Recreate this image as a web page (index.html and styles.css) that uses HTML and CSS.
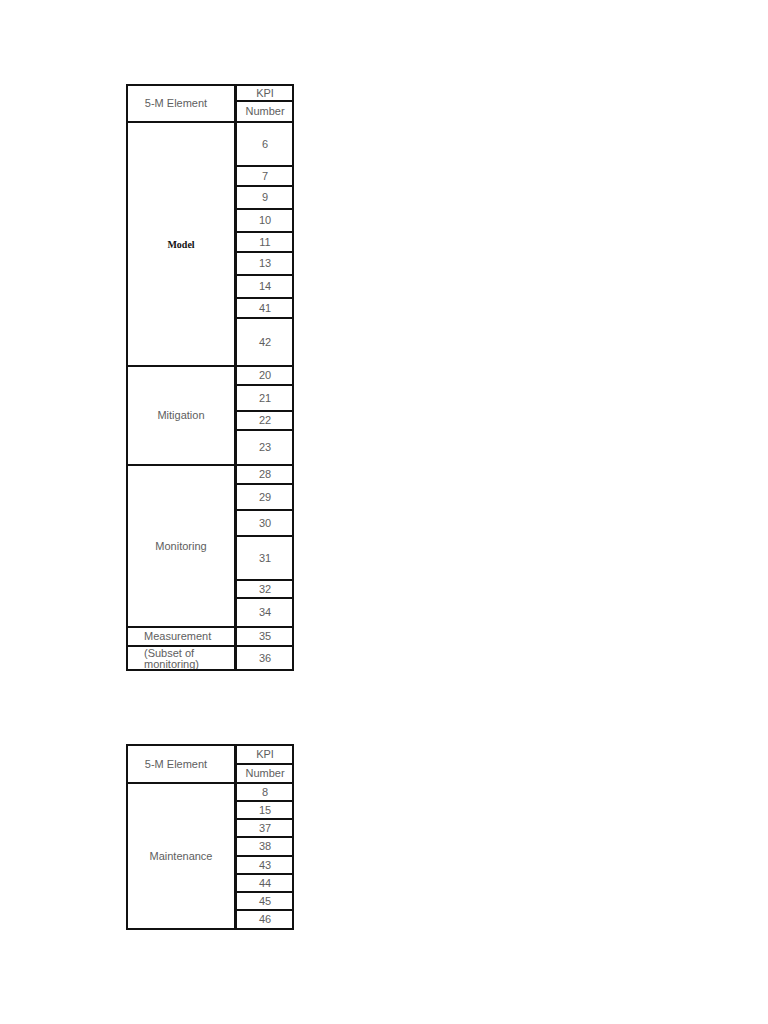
FILE: index.html
```html
<!DOCTYPE html>
<html>
<head>
<meta charset="utf-8">
<link rel="stylesheet" href="styles.css">
</head>
<body>
<div class="page">
  <div class="kpi t1">
    <div class="c l head s2">5-M Element</div>
    <div class="c r">KPI</div>
    <div class="c r">Number</div>
    <div class="c l s9 model">Model</div>
    <div class="c r">6</div>
    <div class="c r">7</div>
    <div class="c r">9</div>
    <div class="c r">10</div>
    <div class="c r">11</div>
    <div class="c r">13</div>
    <div class="c r">14</div>
    <div class="c r">41</div>
    <div class="c r">42</div>
    <div class="c l s4">Mitigation</div>
    <div class="c r">20</div>
    <div class="c r">21</div>
    <div class="c r">22</div>
    <div class="c r">23</div>
    <div class="c l s6">Monitoring</div>
    <div class="c r">28</div>
    <div class="c r">29</div>
    <div class="c r">30</div>
    <div class="c r">31</div>
    <div class="c r">32</div>
    <div class="c r">34</div>
    <div class="c l left">Measurement</div>
    <div class="c r">35</div>
    <div class="c l left top">(Subset of<br>monitoring)</div>
    <div class="c r">36</div>
  </div>

  <div class="kpi t2">
    <div class="c l head s2">5-M Element</div>
    <div class="c r">KPI</div>
    <div class="c r">Number</div>
    <div class="c l s8">Maintenance</div>
    <div class="c r">8</div>
    <div class="c r">15</div>
    <div class="c r">37</div>
    <div class="c r">38</div>
    <div class="c r">43</div>
    <div class="c r">44</div>
    <div class="c r">45</div>
    <div class="c r">46</div>
  </div>
</div>
</body>
</html>
```

FILE: styles.css
```css
html, body {
  margin: 0;
  padding: 0;
  background: #fff;
}

.page {
  padding: 84px 0 0 126px;
  display: flex;
  flex-direction: column;
  align-items: flex-start;
  gap: 73px;
  font-family: "Liberation Sans", Arial, sans-serif;
  font-size: 11px;
  color: #5e5e5e;
}

.kpi {
  display: grid;
  grid-template-columns: 106px 55px;
  column-gap: 3px;
  row-gap: 2px;
  padding: 2px;
  background: #111;
}

.t1 {
  grid-template-rows: 14px 19px 42px 18px 21px 21px 18px 21px 21px 18px 46px 17px 24px 17px 33px 17px 24px 24px 42px 16px 27px 17px 22px;
}

.t2 {
  grid-template-rows: 17px 17px 16px 16px 16px 17px 16px 16px 16px 17px;
}

.c {
  background: #fff;
  display: flex;
  align-items: center;
  justify-content: center;
  overflow: hidden;
  line-height: 11px;
  white-space: nowrap;
}

.l { grid-column: 1; }
.r { grid-column: 2; padding-left: 1px; }

.s2 { grid-row: span 2; }
.s4 { grid-row: span 4; }
.s6 { grid-row: span 6; }
.s8 { grid-row: span 8; }
.s9 { grid-row: span 9; }

.head { padding-right: 10px; }

.model {
  font-family: "Liberation Serif", "Times New Roman", serif;
  font-size: 10px;
  font-weight: bold;
  color: #111;
}

.left {
  justify-content: flex-start;
  padding-left: 16px;
}

.top {
  align-items: flex-start;
  padding-top: 1px;
}
```
